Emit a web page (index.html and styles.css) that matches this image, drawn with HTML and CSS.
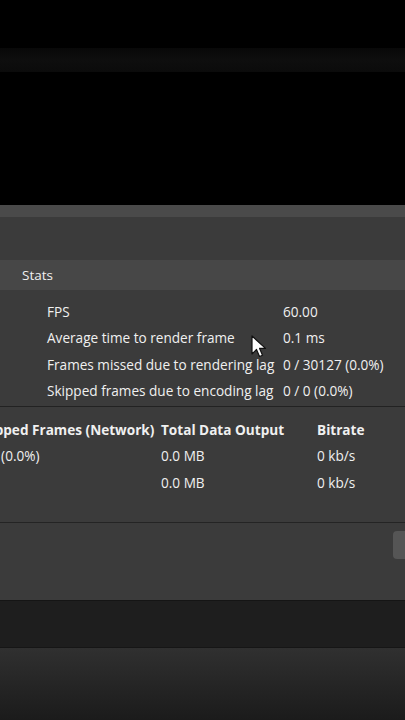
FILE: index.html
```html
<!DOCTYPE html>
<html>
<head>
<meta charset="utf-8">
<link rel="stylesheet" href="styles.css">
</head>
<body>
<div class="screen">
  <div class="black top"></div>
  <div class="band"></div>
  <div class="black mid"></div>
  <div class="window">
    <div class="titlebar"></div>
    <div class="gap"></div>
    <div class="section-head">Stats</div>
    <div class="stats">
      <div class="row"><span class="label">FPS</span><span class="value">60.00</span></div>
      <div class="row"><span class="label">Average time to render frame</span><span class="value">0.1 ms</span></div>
      <div class="row"><span class="label">Frames missed due to rendering lag</span><span class="value">0 / 30127 (0.0%)</span></div>
      <div class="row"><span class="label">Skipped frames due to encoding lag</span><span class="value">0 / 0 (0.0%)</span></div>
    </div>
    <div class="outputs">
      <div class="orow head"><span class="c1">Dropped Frames (Network)</span><span class="c2">Total Data Output</span><span class="c3">Bitrate</span></div>
      <div class="orow"><span class="c1">0 / 0 (0.0%)</span><span class="c2">0.0 MB</span><span class="c3">0 kb/s</span></div>
      <div class="orow"><span class="c1"></span><span class="c2">0.0 MB</span><span class="c3">0 kb/s</span></div>
    </div>
    <div class="footer"><span class="btn"></span></div>
  </div>
  <div class="strip"></div>
  <div class="bottom"></div>
  <svg class="cursor" width="16" height="24" viewBox="0 0 16 24"><path d="M1 1 L1 19 L5.5 14.5 L8.5 21.5 L11.5 20.2 L8.6 13.4 L14.5 13.4 Z" fill="#fff" stroke="#111" stroke-width="1.2" stroke-linejoin="round"/></svg>
</div>
</body>
</html>
```
FILE: styles.css
```css
html, body { margin: 0; padding: 0; background: #000; }
.screen { position: relative; width: 405px; height: 720px; overflow: hidden; font-family: "Open Sans", "Noto Sans", sans-serif; color: #f0f0f0; }
.black { background: #000; }
.top { height: 48px; }
.band { height: 24px; background: linear-gradient(#080808, #0e0e0e 50%, #0b0b0b); }
.mid { height: 133px; }
.window { background: #3b3b3b; }
.titlebar { height: 12px; background: #4a4a4a; }
.gap { height: 43px; }
.section-head { height: 30px; background: #474747; font-size: 13.5px; line-height: 31px; padding-left: 22px; }
.stats { padding: 8px 0 2px 47px; border-bottom: 1px solid #222; }
.row { display: flex; height: 26.5px; align-items: center; font-size: 13.6px; }
.label { width: 236px; white-space: nowrap; }
.value { white-space: nowrap; }
.outputs { padding: 9px 0 26px 0; border-bottom: 1px solid #242424; }
.orow { display: flex; height: 26.5px; align-items: center; font-size: 13.6px; white-space: nowrap; }
.orow.head { font-weight: 700; }
.c1 { margin-left: -30px; width: 191px; }
.c2 { width: 156px; }
.c3 { }
.footer { height: 77px; display: flex; justify-content: flex-end; align-items: flex-start; }
.btn { margin-top: 8px; width: 12px; height: 28px; background: #555; border-radius: 4px 0 0 4px; }
.strip { height: 46px; background: #1e1e1e; border-top: 1px solid #151515; border-bottom: 1px solid #161616; }
.bottom { height: 72px; background: linear-gradient(#303030, #1b1b1b); }
.cursor { position: absolute; left: 251px; top: 335px; }
```
